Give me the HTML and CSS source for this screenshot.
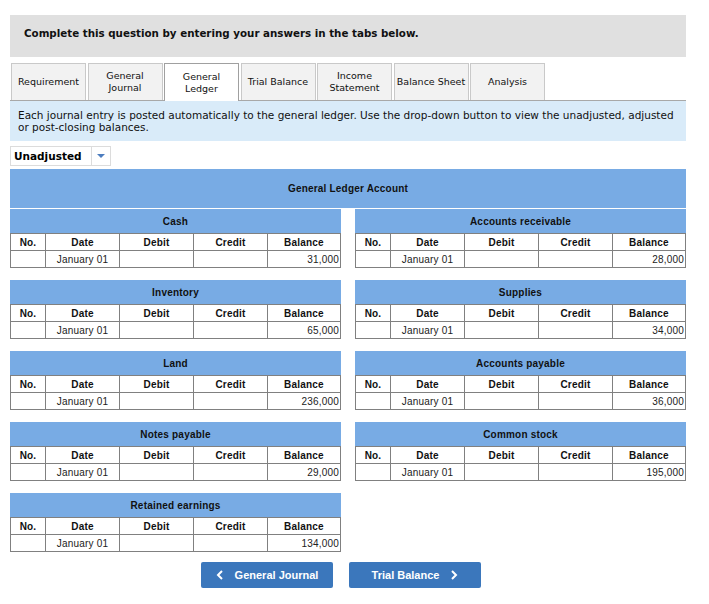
FILE: index.html
```html
<!DOCTYPE html>
<html>
<head>
<meta charset="utf-8">
<link rel="stylesheet" href="styles.css">
</head>
<body>
<div class="page">
  <div class="prompt">Complete this question by entering your answers in the tabs below.</div>
  <div class="tabs">
    <div class="tab">Requirement</div>
    <div class="tab">General<br>Journal</div>
    <div class="tab active">General<br>Ledger</div>
    <div class="tab">Trial Balance</div>
    <div class="tab">Income<br>Statement</div>
    <div class="tab">Balance Sheet</div>
    <div class="tab">Analysis</div>
  </div>
  <div class="info">Each journal entry is posted automatically to the general ledger. Use the drop-down button to view the unadjusted, adjusted or post-closing balances.</div>
  <div class="select">
    <span class="select-label">Unadjusted</span>
    <span class="select-btn"><span class="tri"></span></span>
  </div>
  <div class="gl-head">General Ledger Account</div>
  <div class="grid">
    <div class="acct">
      <div class="acct-head">Cash</div>
      <table class="tbl">
        <tr><th>No.</th><th>Date</th><th>Debit</th><th>Credit</th><th>Balance</th></tr>
        <tr><td></td><td class="c">January 01</td><td></td><td></td><td class="r">31,000</td></tr>
      </table>
    </div>
    <div class="acct">
      <div class="acct-head">Accounts receivable</div>
      <table class="tbl">
        <tr><th>No.</th><th>Date</th><th>Debit</th><th>Credit</th><th>Balance</th></tr>
        <tr><td></td><td class="c">January 01</td><td></td><td></td><td class="r">28,000</td></tr>
      </table>
    </div>
    <div class="acct">
      <div class="acct-head">Inventory</div>
      <table class="tbl">
        <tr><th>No.</th><th>Date</th><th>Debit</th><th>Credit</th><th>Balance</th></tr>
        <tr><td></td><td class="c">January 01</td><td></td><td></td><td class="r">65,000</td></tr>
      </table>
    </div>
    <div class="acct">
      <div class="acct-head">Supplies</div>
      <table class="tbl">
        <tr><th>No.</th><th>Date</th><th>Debit</th><th>Credit</th><th>Balance</th></tr>
        <tr><td></td><td class="c">January 01</td><td></td><td></td><td class="r">34,000</td></tr>
      </table>
    </div>
    <div class="acct">
      <div class="acct-head">Land</div>
      <table class="tbl">
        <tr><th>No.</th><th>Date</th><th>Debit</th><th>Credit</th><th>Balance</th></tr>
        <tr><td></td><td class="c">January 01</td><td></td><td></td><td class="r">236,000</td></tr>
      </table>
    </div>
    <div class="acct">
      <div class="acct-head">Accounts payable</div>
      <table class="tbl">
        <tr><th>No.</th><th>Date</th><th>Debit</th><th>Credit</th><th>Balance</th></tr>
        <tr><td></td><td class="c">January 01</td><td></td><td></td><td class="r">36,000</td></tr>
      </table>
    </div>
    <div class="acct">
      <div class="acct-head">Notes payable</div>
      <table class="tbl">
        <tr><th>No.</th><th>Date</th><th>Debit</th><th>Credit</th><th>Balance</th></tr>
        <tr><td></td><td class="c">January 01</td><td></td><td></td><td class="r">29,000</td></tr>
      </table>
    </div>
    <div class="acct">
      <div class="acct-head">Common stock</div>
      <table class="tbl">
        <tr><th>No.</th><th>Date</th><th>Debit</th><th>Credit</th><th>Balance</th></tr>
        <tr><td></td><td class="c">January 01</td><td></td><td></td><td class="r">195,000</td></tr>
      </table>
    </div>
    <div class="acct">
      <div class="acct-head">Retained earnings</div>
      <table class="tbl">
        <tr><th>No.</th><th>Date</th><th>Debit</th><th>Credit</th><th>Balance</th></tr>
        <tr><td></td><td class="c">January 01</td><td></td><td></td><td class="r">134,000</td></tr>
      </table>
    </div>
  </div>
  <div class="nav">
    <div class="btn"><svg class="chev" width="8" height="10" viewBox="0 0 8 10"><path d="M6 1 L2 5 L6 9" fill="none" stroke="#fff" stroke-width="2"/></svg><span>General Journal</span></div>
    <div class="btn"><span>Trial Balance</span><svg class="chev" width="8" height="10" viewBox="0 0 8 10"><path d="M2 1 L6 5 L2 9" fill="none" stroke="#fff" stroke-width="2"/></svg></div>
  </div>
</div>
</body>
</html>
```

FILE: styles.css
```css
* { box-sizing: border-box; }
body {
  margin: 0;
  background: #fff;
  font-family: "DejaVu Sans", Verdana, sans-serif;
  color: #000;
}
.page {
  width: 676px;
  margin-left: 10px;
  padding-top: 15px;
}
.prompt {
  height: 42px;
  background: #e0e0e0;
  font-weight: bold;
  font-size: 10.3px;
  line-height: 12px;
  padding: 12px 0 0 14px;
  color: #111;
}
.tabs {
  margin-top: 6px;
  display: flex;
  gap: 1.5px;
  padding-left: 1px;
  border-bottom: 1px solid #a8a8a8;
  height: 38px;
}
.tab {
  width: 75px;
  flex: none;
  height: 37px;
  background: #f2f2f2;
  border: 1px solid #c9c9c9;
  border-bottom: none;
  font-size: 9.5px;
  line-height: 12px;
  text-align: center;
  display: flex;
  align-items: center;
  justify-content: center;
  color: #111;
}
.tab.active {
  background: #fff;
  border-color: #a0a0a0;
  height: 38px;
  position: relative;
}
.info {
  background: #d9ebf9;
  height: 40px;
  padding: 8px 8px 0 8px;
  font-size: 10.5px;
  line-height: 12px;
  color: #111;
}
.select {
  margin-top: 5px;
  width: 101px;
  height: 20px;
  border: 1px solid #dcdcdc;
  display: flex;
  align-items: stretch;
}
.select-label {
  flex: 1;
  font-weight: bold;
  font-size: 10.5px;
  line-height: 18px;
  padding-left: 3px;
}
.select-btn {
  width: 19px;
  border-left: 1px solid #dcdcdc;
  display: flex;
  align-items: center;
  justify-content: center;
}
.tri {
  width: 0;
  height: 0;
  border-left: 4px solid transparent;
  border-right: 4px solid transparent;
  border-top: 4px solid #4c7dbf;
}
.gl-head {
  margin-top: 3px;
  height: 39px;
  background: #78abe4;
  font-family: "Liberation Sans", Arial, sans-serif;
  font-weight: bold;
  font-size: 10px;
  letter-spacing: 0.2px;
  display: flex;
  align-items: center;
  justify-content: center;
  color: #111;
}
.grid {
  margin-top: 1px;
  display: grid;
  grid-template-columns: 331px 331px;
  column-gap: 14px;
  row-gap: 12px;
  font-family: "Liberation Sans", Arial, sans-serif;
}
.acct-head {
  height: 24px;
  background: #78abe4;
  font-weight: bold;
  font-size: 10px;
  letter-spacing: 0.2px;
  display: flex;
  align-items: center;
  justify-content: center;
  color: #111;
}
.tbl {
  width: 331px;
  border-collapse: collapse;
  table-layout: fixed;
  font-size: 10px;
  letter-spacing: 0.2px;
}
.tbl th, .tbl td {
  border: 1px solid #808080;
  padding: 2px 2px 0 2px;
  line-height: 12px;
  color: #111;
}
.tbl th {
  height: 17px;
  font-weight: bold;
  text-align: center;
}
.tbl td { height: 17px; }
.tbl th:nth-child(1) { width: 35px; }
.tbl th:nth-child(2),
.tbl th:nth-child(3),
.tbl th:nth-child(4) { width: 74px; }
.tbl td.c { text-align: center; color: #222; }
.tbl td.r { text-align: right; padding-right: 1px; color: #222; }
.nav {
  margin-top: 10px;
  display: flex;
  gap: 16px;
  padding-left: 191px;
}
.btn {
  width: 132px;
  height: 26px;
  background: #3b77bc;
  border-radius: 2px;
  color: #fff;
  font-family: "Liberation Sans", Arial, sans-serif;
  font-weight: bold;
  font-size: 11px;
  display: flex;
  align-items: center;
  justify-content: center;
  gap: 11px;
}
.chev { display: block; }
```
